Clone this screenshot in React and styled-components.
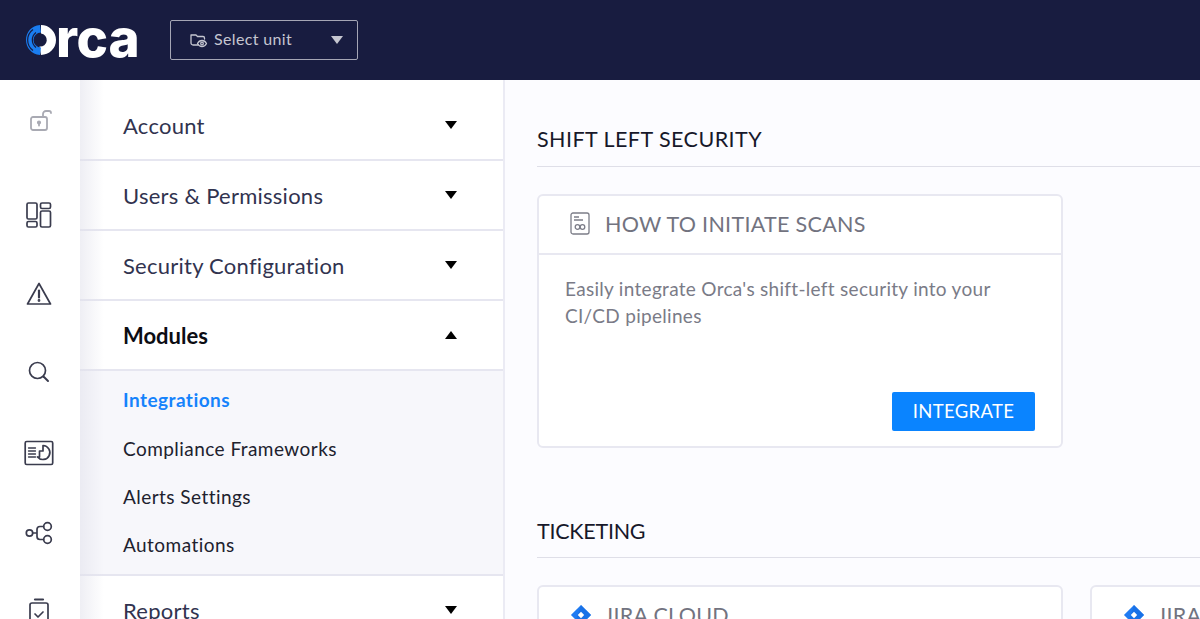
import React from "react";
import styled, { createGlobalStyle } from "styled-components";

const Global = createGlobalStyle`
  html, body { margin: 0; padding: 0; height: 100%; overflow: hidden; }
  body { font-family: "Lato", "Noto Sans", sans-serif; background: #fcfcff; }
  #root { height: 100%; }
  * { box-sizing: border-box; }
`;

const Page = styled.div`
  height: 619px;
  display: flex;
  flex-direction: column;
  overflow: hidden;
`;
const Header = styled.header`
  height: 80px;
  flex: none;
  background: #181c40;
  display: flex;
  align-items: center;
  padding-left: 25px;
`;
const Logo = styled.div`
  display: flex;
  align-items: center;
  width: 145px;
  height: 40px;
`;
const LogoText = styled.span`
  font-family: "Inter", sans-serif;
  font-weight: 800;
  font-size: 53px;
  line-height: 40px;
  letter-spacing: -0.2px;
  color: #fff;
  margin-left: -1px;
  margin-top: -5px;
`;
const UnitSelect = styled.div`
  width: 188px;
  height: 40px;
  border: 1px solid #a5a6b5;
  border-radius: 2px;
  display: flex;
  align-items: center;
  padding: 0 14px 0 19px;
  color: #c5c6d0;
  font-size: 16px;
  letter-spacing: 0.35px;
  gap: 7px;
`;
const UnitLabel = styled.span`
  margin-top: -3px;
  margin-left: -1px;
`;
const Caret = styled.span`
  width: 0;
  height: 0;
  margin-left: auto;
  border-left: ${p => p.$w}px solid transparent;
  border-right: ${p => p.$w}px solid transparent;
  ${p => (p.$up ? "border-bottom" : "border-top")}: ${p => p.$h}px solid ${p => p.$color};
`;
const Body = styled.div`
  flex: 1;
  display: flex;
  min-height: 0;
`;
const Rail = styled.nav`
  width: 80px;
  flex: none;
  background: #fff;
  display: flex;
  flex-direction: column;
  align-items: center;
  padding: 29px 2px 0 0;
  color: #3a3c4e;
`;
const RailIcon = styled.div`
  height: ${p => p.$h}px;
  display: flex;
  flex: none;
  justify-content: center;
  align-items: flex-start;
  margin-left: ${p => p.$dx || 0}px;
`;
const Menu = styled.aside`
  width: 425px;
  flex: none;
  padding-top: 11px;
  background: #fff;
  border-right: 2px solid #ebebf4;
  position: relative;
  &::before {
    content: "";
    position: absolute;
    top: 0;
    bottom: 0;
    left: 0;
    width: 24px;
    z-index: 2;
    background: linear-gradient(to right, rgba(225,225,235,0.55), rgba(225,225,235,0));
  }
`;
const MenuRow = styled.div`
  height: 70px;
  display: flex;
  align-items: center;
  padding: 0 46px 0 43px;
  border-bottom: 2px solid #e6e6f0;
  font-size: 22px;
  letter-spacing: ${p => (p.$active ? "0" : "0.25px")};
  color: ${p => (p.$active ? "#0c0d14" : "#31334f")};
  font-weight: ${p => (p.$active ? 700 : 400)};
`;
const SubList = styled.div`
  height: 205px;
  background: #f7f7fb;
  border-bottom: 2px solid #e6e6f0;
  padding: 4px 0 0 43px;
`;
const SubItem = styled.div`
  height: 48.4px;
  display: flex;
  align-items: center;
  font-size: 19px;
  letter-spacing: 0.45px;
  color: ${p => (p.$active ? "#1683fb" : "#20212e")};
  font-weight: ${p => (p.$active ? 700 : 400)};
  padding-top: ${p => (p.$active ? 0 : 1)}px;
`;
const Main = styled.main`
  flex: 1;
  min-width: 0;
  background: #fcfcff;
  padding: 45px 0 0 32px;
`;
const SectionTitle = styled.h2`
  margin: 0 0 27px;
  height: 42px;
  padding-top: ${p => p.$pt || 0}px;
  border-bottom: 1px solid #dfdfe8;
  font-size: 21.5px;
  line-height: 28px;
  font-weight: 400;
  letter-spacing: ${p => p.$ls}px;
  color: #17182a;
`;
const Cards = styled.div`
  display: flex;
  gap: 27px;
`;
const Card = styled.section`
  width: 526px;
  flex: none;
  height: ${p => p.$h}px;
  background: #fff;
  border: 2px solid #e8e8f1;
  border-radius: 6px;
  display: flex;
  flex-direction: column;
  margin-bottom: ${p => p.$mb || 0}px;
`;
const CardHead = styled.div`
  height: 59px;
  flex: none;
  display: flex;
  align-items: center;
  gap: ${p => p.$gap}px;
  padding: 0 0 2px 31px;
  border-bottom: 2px solid #e8e8f1;
  font-size: 21.5px;
  letter-spacing: 0.3px;
  color: #72737f;
`;
const CardText = styled.p`
  margin: 20px 0 0 26px;
  width: 450px;
  font-size: 19px;
  line-height: 27px;
  letter-spacing: 0.3px;
  color: #7a7b87;
`;
const CardFoot = styled.div`
  margin-top: auto;
  display: flex;
  justify-content: flex-end;
  padding: 0 26px 15px 0;
`;
const Button = styled.button`
  width: 143px;
  height: 39px;
  border: 0;
  border-radius: 2px;
  background: #0a84ff;
  color: #fff;
  font-family: inherit;
  font-size: 18.5px;
  letter-spacing: 0.35px;
  padding: 0 0 2px;
`;

const ic = { fill: "none", stroke: "currentColor", strokeWidth: 1.7, strokeLinecap: "round", strokeLinejoin: "round" };

const OrcaMark = () => (
  <svg width="32" height="32" viewBox="0 0 32 32">
    <path d="M16 1a15 15 0 0 1 0 30l-1.500-8.500a6.500 6.500 0 0 0 1.500-13z" fill="#fff" />
    <path d="M15 1.100C6.500 1.600 1 8.500 1 16s5.500 14.400 14 14.900l1-7.400a7.500 7.500 0 0 1 0-15z" fill="#1a7df0" />
    <g fill="none" stroke="#181c40" strokeWidth="1.200">
      <path d="M8 5.500a13 13 0 0 0 0 21" />
      <path d="M11 8.500a9.500 9.500 0 0 0 0 15" />
    </g>
  </svg>
);
const UnitIcon = () => (
  <svg width="18" height="16" viewBox="0 0 18 16" {...ic} strokeWidth="1.3">
    <path d="M8 13H3a2 2 0 0 1-2-2V3h5l1.500 1.500H13a1.500 1.500 0 0 1 1.500 1.500v1" />
    <path d="M7.500 11.500c1-2 2.500-3 4.500-3s3.500 1 4.500 3c-1 2-2.500 3-4.500 3s-3.500-1-4.500-3z" />
    <circle cx="12" cy="11.500" r="1.300" />
  </svg>
);
const LockIcon = () => (
  <svg width="24" height="24" viewBox="0 0 24 24" fill="none" stroke="#a9aab3" strokeWidth="1.800" strokeLinecap="round" strokeLinejoin="round">
    <rect x="2" y="8" width="16" height="13" rx="2" />
    <path d="M14 8V5a3 3 0 0 1 3-3h3a2 2 0 0 1 2 2" />
    <circle cx="10" cy="13.500" r="1.200" fill="#a9aab3" />
    <path d="M10 14v2.500" />
  </svg>
);
const DashIcon = () => (
  <svg width="26" height="26" viewBox="0 0 26 26" {...ic}>
    <rect x="1" y="1" width="10" height="16" rx="1.500" />
    <rect x="1" y="19.500" width="10" height="5.500" rx="1.500" />
    <rect x="14.500" y="1" width="10" height="5.500" rx="1.500" />
    <rect x="14.500" y="9" width="10" height="16" rx="1.500" />
  </svg>
);
const AlertIcon = () => (
  <svg width="26" height="24" viewBox="0 0 26 24" {...ic}>
    <path d="M13 1.500 1.500 22h23z" />
    <path d="M13 8.500v7" strokeWidth="2.200" />
    <circle cx="13" cy="18.500" r="0.600" strokeWidth="1.600" />
  </svg>
);
const SearchIcon = () => (
  <svg width="22" height="22" viewBox="0 0 22 22" {...ic}>
    <circle cx="9.500" cy="9.500" r="8" />
    <path d="m15.500 15.500 4.500 4.500" strokeWidth="2" />
  </svg>
);
const ReportIcon = () => (
  <svg width="30" height="26" viewBox="0 0 30 26" {...ic}>
    <rect x="1.200" y="1.500" width="27.500" height="23" rx="1.500" />
    <path d="M4.500 8h7M4.500 11h7M4.500 14h7M4.500 17h7" strokeWidth="1.300" />
    <path d="M19 5.500a7 7 0 1 1-5.500 11.500M19 5.500v5.500h-3.500v6h-2" />
  </svg>
);
const FlowIcon = () => (
  <svg width="28" height="24" viewBox="0 0 28 24" {...ic}>
    <circle cx="4.500" cy="12" r="3.200" />
    <circle cx="22.500" cy="5.500" r="3.800" />
    <circle cx="22.500" cy="18.500" r="3.800" />
    <path d="M8 12h4M18.500 5.500H15a3 3 0 0 0-3 3v7a3 3 0 0 0 3 3h3.500" />
  </svg>
);
const ClipIcon = () => (
  <svg width="22" height="28" viewBox="0 0 22 28" {...ic}>
    <path d="M7 1.500h8" strokeWidth="2.200" />
    <rect x="2" y="5" width="18" height="22" rx="2" />
    <path d="m7 16 3 3 5-5" />
  </svg>
);
const ScanIcon = () => (
  <svg width="20" height="24" viewBox="0 0 20 24" fill="none" stroke="#7c7d88" strokeWidth="1.300">
    <rect x="1" y="1" width="18" height="21" rx="2" />
    <path d="M4 5h5M4 8h9" />
    <circle cx="7.500" cy="15" r="2.300" />
    <circle cx="12.500" cy="15" r="2.300" />
  </svg>
);
const JiraIcon = () => (
  <svg width="22" height="22" viewBox="0 0 24 24">
    <path d="M12 1 23 12 12 23 1 12z" fill="#1f7bf2" />
    <path d="M12 1 23 12 12 23 6.500 17.500z" fill="#156be0" opacity="0.600" />
    <path d="m12 8.500 3.500 3.500-3.500 3.500L8.500 12z" fill="#fff" />
  </svg>
);

const rows = ["Account", "Users & Permissions", "Security Configuration"];
const subs = ["Compliance Frameworks", "Alerts Settings", "Automations"];

export default function App() {
  return (
    <Page>
      <Global />
      <Header>
        <Logo>
          <OrcaMark />
          <LogoText>rca</LogoText>
        </Logo>
        <UnitSelect>
          <UnitIcon />
          <UnitLabel>Select unit</UnitLabel>
          <Caret $w={6} $h={8} $color="#c5c6d0" />
        </UnitSelect>
      </Header>
      <Body>
        <Rail>
          <RailIcon $h={93} $dx={4}><LockIcon /></RailIcon>
          <RailIcon $h={80}><DashIcon /></RailIcon>
          <RailIcon $h={79}><AlertIcon /></RailIcon>
          <RailIcon $h={79}><SearchIcon /></RailIcon>
          <RailIcon $h={81}><ReportIcon /></RailIcon>
          <RailIcon $h={77}><FlowIcon /></RailIcon>
          <RailIcon $h={40}><ClipIcon /></RailIcon>
        </Rail>
        <Menu>
          {rows.map(r => (
            <MenuRow key={r}>
              {r}
              <Caret $w={6} $h={8} $color="#000" />
            </MenuRow>
          ))}
          <MenuRow $active>
            Modules
            <Caret $up $w={6} $h={8} $color="#000" />
          </MenuRow>
          <SubList>
            <SubItem $active>Integrations</SubItem>
            {subs.map(s => <SubItem key={s}>{s}</SubItem>)}
          </SubList>
          <MenuRow>
            Reports
            <Caret $w={6} $h={8} $color="#000" />
          </MenuRow>
        </Menu>
        <Main>
          <SectionTitle $ls={0.45}>SHIFT LEFT SECURITY</SectionTitle>
          <Cards>
            <Card $h={254} $mb={68}>
              <CardHead $gap={15}><ScanIcon />HOW TO INITIATE SCANS</CardHead>
              <CardText>Easily integrate Orca's shift-left security into your CI/CD pipelines</CardText>
              <CardFoot><Button>INTEGRATE</Button></CardFoot>
            </Card>
          </Cards>
          <SectionTitle $ls={-0.25} $pt={1}>TICKETING</SectionTitle>
          <Cards>
            <Card $h={254}><CardHead $gap={12}><JiraIcon />JIRA CLOUD</CardHead></Card>
            <Card $h={254}><CardHead $gap={12}><JiraIcon />JIRA SERVER</CardHead></Card>
          </Cards>
        </Main>
      </Body>
    </Page>
  );
}
